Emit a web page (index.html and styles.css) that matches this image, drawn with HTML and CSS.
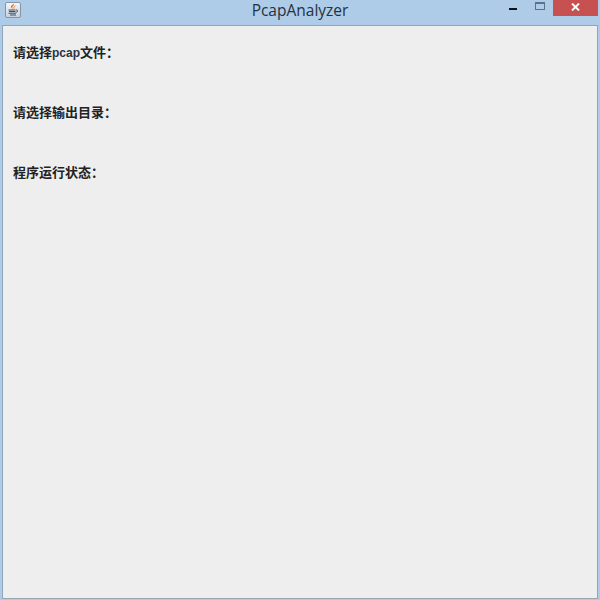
FILE: index.html
```html
<!DOCTYPE html>
<html lang="zh">
<head>
<meta charset="utf-8">
<title>PcapAnalyzer</title>
<link rel="stylesheet" href="styles.css">
</head>
<body>
<div class="window">
  <header class="titlebar">
    <div class="app-icon">
      <svg viewBox="0 0 16 16" width="16" height="16">
        <defs>
          <linearGradient id="g" x1="0" y1="0" x2="0" y2="1">
            <stop offset="0" stop-color="#f6f7f8"/>
            <stop offset="1" stop-color="#c6d0da"/>
          </linearGradient>
        </defs>
        <rect x="0.5" y="0.5" width="15" height="15" rx="1.5" fill="url(#g)" stroke="#8595a6"/>
        <path d="M8.800 1.500c1.300 1.500-2.300 2.800-1.300 4.500.3.500.6.800.9 1.100C6.500 6.300 5.300 5 6.300 3.800 7 3 8.600 2.700 8.800 1.500z" fill="#e8641a"/>
        <path d="M10.500 3.800c-1.200.6-2 1.400-1.300 2.700" fill="none" stroke="#e98a3a" stroke-width="1"/>
        <path d="M3.500 8h7M4 9.500h6.500M3.500 11.200h7.500M5 13h6" stroke="#3c4f64" stroke-width="1" fill="none"/>
        <path d="M11 8c2-.4 2.400 1.800 0 2.400" stroke="#3c4f64" stroke-width="1" fill="none"/>
      </svg>
    </div>
    <div class="title">PcapAnalyzer</div>
    <div class="controls">
      <div class="btn-min"><span class="min-bar"></span></div>
      <div class="btn-max"><span class="max-box"></span></div>
      <div class="btn-close">
        <svg viewBox="0 0 9 8" width="9" height="8"><path d="M1 .6 8 7.400M8 .6 1 7.400" stroke="#fff" stroke-width="2" fill="none"/></svg>
      </div>
    </div>
  </header>
  <main class="panel">
    <div class="row">请选择<span class="latin">pcap</span>文件：</div>
    <div class="row">请选择输出目录：</div>
    <div class="row">程序运行状态：</div>
  </main>
</div>
</body>
</html>
```
FILE: styles.css
```css
html, body {
  margin: 0;
  padding: 0;
  width: 600px;
  height: 600px;
  overflow: hidden;
}
.window {
  width: 600px;
  height: 600px;
  box-sizing: border-box;
  display: flex;
  flex-direction: column;
  background: #aecbe8;
  padding: 0 2px 1px 2px;
}
.titlebar {
  height: 25px;
  flex: none;
  display: flex;
  align-items: flex-start;
  position: relative;
  margin: 0 -2px;
}
.app-icon {
  width: 16px;
  height: 16px;
  margin: 2px 0 0 5px;
}
.title {
  position: absolute;
  left: 0;
  right: 0;
  top: 0;
  text-align: center;
  font: 15.500px/21px "Open Sans", "Noto Sans", sans-serif;
  color: #26323e;
}
.controls {
  margin-left: auto;
  display: flex;
  padding-right: 2px;
}
.btn-min {
  width: 26px;
  height: 16px;
  box-sizing: border-box;
  padding-right: 8px;
  display: flex;
  justify-content: flex-end;
}
.min-bar {
  width: 8px;
  height: 2px;
  margin-top: 8px;
  background: #111;
}
.btn-max {
  width: 18px;
  height: 16px;
  box-sizing: border-box;
  padding: 2px 0 0 10px;
  flex: none;
  width: 28px;
}
.max-box {
  display: block;
  width: 8px;
  height: 5px;
  border: 1px solid #5d7286;
  border-top-width: 2px;
}
.btn-close {
  width: 45px;
  height: 16px;
  box-sizing: border-box;
  padding-top: 3px;
  background: #c75050;
  display: flex;
  align-items: flex-start;
  justify-content: center;
}
.panel {
  flex: 1;
  background: #eeeeee;
  border: 1px solid #8fa6bd;
  border-bottom-color: #9aa6b2;
  display: flex;
  flex-direction: column;
  gap: 40px;
  padding: 17px 0 0 10px;
}
.row {
  height: 20px;
  font: bold 13px/20px "Liberation Sans", "Noto Sans CJK SC", sans-serif;
  color: #222;
}
.latin {
  font-size: 12px;
  color: #2c3440;
}
```
